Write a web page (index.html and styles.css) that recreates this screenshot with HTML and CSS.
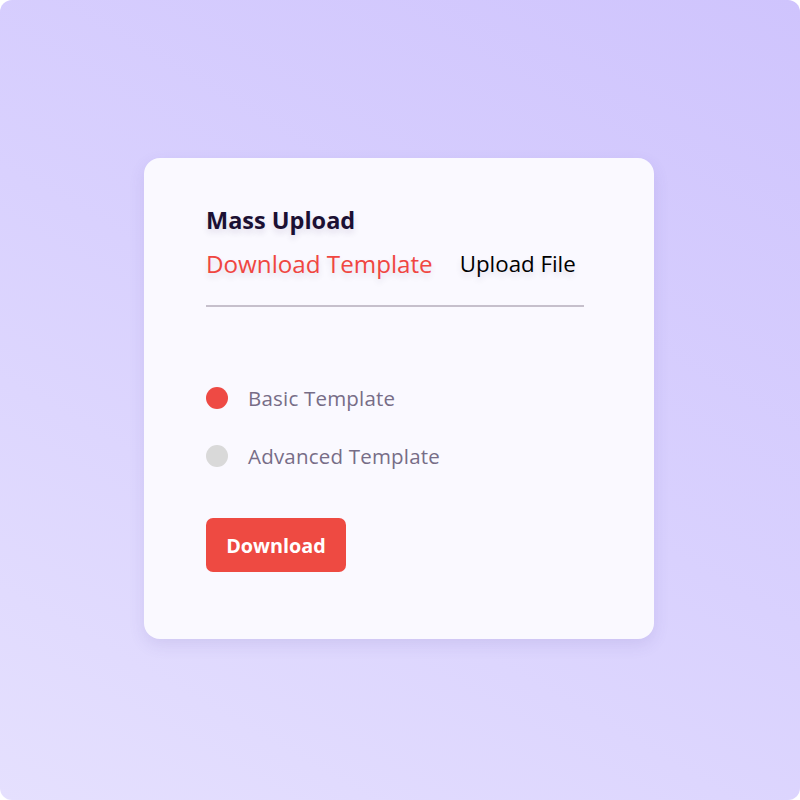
FILE: index.html
```html
<!DOCTYPE html>
<html>
<head>
<meta charset="utf-8">
<link rel="stylesheet" href="styles.css">
</head>
<body>
<div class="page">
  <div class="card">
    <h1 class="title">Mass Upload</h1>
    <div class="tabs">
      <span class="tab active">Download Template</span>
      <span class="tab">Upload File</span>
    </div>
    <div class="divider"></div>
    <div class="options">
      <div class="option"><span class="radio on"></span><span class="label">Basic Template</span></div>
      <div class="option"><span class="radio"></span><span class="label">Advanced Template</span></div>
    </div>
    <button class="btn">Download</button>
  </div>
</div>
</body>
</html>
```
FILE: styles.css
```css
html, body { margin: 0; padding: 0; background: #ffffff; }
body { font-family: "Open Sans", "Noto Sans", sans-serif; }
.page {
  width: 800px; height: 800px; box-sizing: border-box;
  border-radius: 12px;
  background: linear-gradient(30deg, #e5e0fe 0%, #d9d1fe 50%, #cfc4fd 100%);
  display: flex; align-items: center; justify-content: center;
}
.card {
  width: 510px; height: 481px; box-sizing: border-box;
  margin-top: -3px;
  margin-left: -2px;
  background: #faf9ff;
  border-radius: 16px;
  box-shadow: 0 6px 16px rgba(90, 70, 160, 0.12);
  padding: 46px 70px 0 62px;
}
.title {
  margin: 0; font-size: 23.5px; font-weight: 700; color: #1b1033;
  line-height: 32px;
  text-shadow: 0 4px 6px rgba(40, 20, 80, 0.12);
}
.tabs { display: flex; align-items: center; gap: 27px; margin-top: 12px; height: 32px; }
.tab { font-size: 22.3px; color: #000; text-shadow: 0 4px 6px rgba(40, 20, 80, 0.12); line-height: 32px; }
.tab.active { color: #f04641; font-size: 24.2px; }
.divider { height: 2px; background: #c6c0cc; margin-top: 25px; width: 378px; }
.options { margin-top: 77px; display: flex; flex-direction: column; gap: 30px; }
.option { display: flex; align-items: center; gap: 20px; height: 28px; }
.radio { width: 22px; height: 22px; border-radius: 50%; background: #d9d9d9; flex: none; }
.radio.on { background: #ee4a44; }
.label { font-size: 20.5px; color: #776d87; letter-spacing: 0.2px; }
.btn {
  display: block;
  margin-top: 48px;
  width: 140px; height: 54px; border: 0; border-radius: 7px; padding: 0;
  background: #ee4a42; color: #fff;
  font-family: "Open Sans", "Noto Sans", sans-serif;
  font-size: 19.8px; font-weight: 700;
}
```
